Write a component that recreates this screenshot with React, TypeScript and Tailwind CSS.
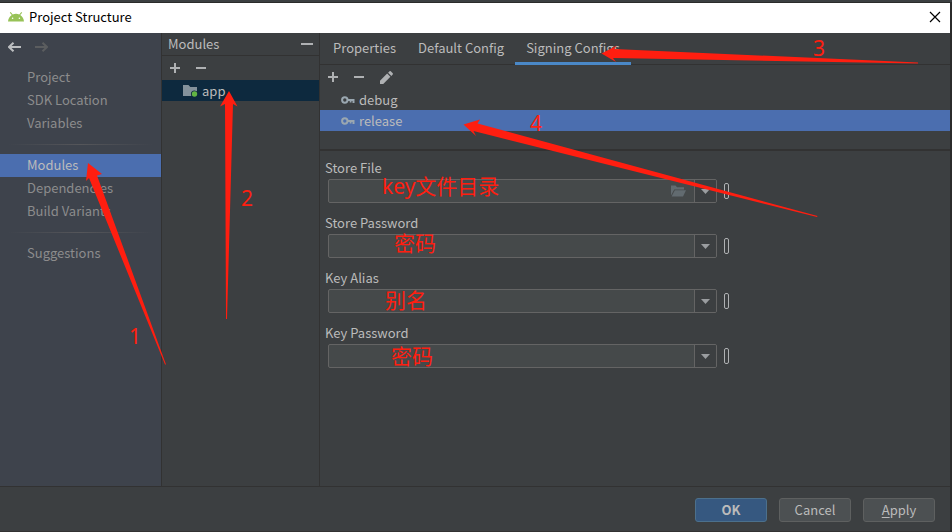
import React from "react";

const sidebarGroups = [
  ["Project", "SDK Location", "Variables"],
  ["Modules", "Dependencies", "Build Variants"],
  ["Suggestions"],
];

const tabs = ["Properties", "Default Config", "Signing Configs"];

const fields = [
  { id: "store-file", label: "Store File", browse: true },
  { id: "store-password", label: "Store Password", browse: false },
  { id: "key-alias", label: "Key Alias", browse: false },
  { id: "key-password", label: "Key Password", browse: false },
];

function AndroidIcon() {
  return (
    <svg width="16" height="10" viewBox="0 0 16 10" className="block">
      <path
        d="M0 9.600C.2 6.800 1.600 4.400 3.800 3L1.800.700l.900-.600L4.700 2.400a8.400 8.400 0 0 1 6.600 0L13.300 .100l.900.600L12.200 3c2.200 1.400 3.600 3.800 3.800 6.600z"
        fill="#97c257"
      />
      <circle cx="4.600" cy="6.300" r="0.800" fill="#fff" />
      <circle cx="11.400" cy="6.300" r="0.800" fill="#fff" />
    </svg>
  );
}

function ArrowIcon({ forward = false }: { forward?: boolean }) {
  return (
    <svg width="13" height="10" viewBox="0 0 13 10" fill="none" strokeWidth="2" className="block">
      {forward ? (
        <path d="M0 5h12M7.500.700 12 5 7.500 9.300" stroke="#5b5d5f" />
      ) : (
        <path d="M13 5H1M5.500.700 1 5l4.500 4.300" stroke="#bcbec0" />
      )}
    </svg>
  );
}

function PlusIcon() {
  return (
    <svg width="10" height="10" viewBox="0 0 10 10" className="block">
      <path d="M4 0h2v4h4v2H6v4H4V6H0V4h4z" fill="#afb1b3" />
    </svg>
  );
}

function MinusIcon() {
  return (
    <svg width="10" height="10" viewBox="0 0 10 10" className="block">
      <path d="M0 4h10v2H0z" fill="#afb1b3" />
    </svg>
  );
}

function PencilIcon() {
  return (
    <svg width="13" height="13" viewBox="0 0 14 14" className="block">
      <path d="M0 14v-3.500L7.700 2.800l3.500 3.500L3.500 14zM8.700 1.800 10.300.300q.700-.500 1.300 0l2.100 2.100q.500.600 0 1.300L12.200 5.300z" fill="#afb1b3" />
    </svg>
  );
}

function ModuleIcon() {
  return (
    <svg width="15" height="13" viewBox="0 0 15 13" className="block">
      <path d="M0 1h5.500L7.300 3H14V12H0z" fill="#84929c" />
      <circle cx="11.500" cy="10" r="3.600" fill="#0d293e" />
      <circle cx="11.500" cy="10" r="2.700" fill="#62b543" />
    </svg>
  );
}

function KeyIcon() {
  return (
    <svg width="14" height="8" viewBox="0 0 14 8" className="block">
      <circle cx="3.800" cy="4" r="2.700" fill="none" stroke="#9aa7b0" strokeWidth="2" />
      <path d="M6.500 3H13.500v4H11.500V5H10.500v1.500H8.700V5H6.500z" fill="#9aa7b0" />
    </svg>
  );
}

function FolderIcon() {
  return (
    <svg width="15" height="12" viewBox="0 0 15 12" className="block">
      <path d="M0 .500h4.500L6 2.200h7V4.500H3.200L0 10.500z" fill="#626b70" />
      <path d="M3.800 5.300H15L12 11.500H.600z" fill="#626b70" />
    </svg>
  );
}

function Sidebar() {
  return (
    <nav className="w-[162px] shrink-0 border-r border-[#323232] bg-[#3e434c]">
      <div className="flex h-[33px] items-center gap-3.5 px-2 pb-1.5">
        <button type="button" aria-label="Back"><ArrowIcon /></button>
        <button type="button" aria-label="Forward" disabled><ArrowIcon forward /></button>
      </div>
      {sidebarGroups.map((group, index) => (
        <div key={group[0]}>
          {index > 0 && (
            <div className="flex h-[19px] items-center px-2">
              <hr className="h-px w-full border-0 bg-linear-to-r from-transparent via-[#55565a] to-transparent" />
            </div>
          )}
          <ul>
            {group.map((name) => (
              <li key={name}>
                <a
                  href="#"
                  className={
                    name === "Modules"
                      ? "block h-[23px] bg-[#4b6eaf] pl-[27px] leading-[22px] text-[#bbbbbb]"
                      : "block h-[23px] pl-[27px] leading-[22px] text-[#8c8c8c]"
                  }
                >
                  {name}
                </a>
              </li>
            ))}
          </ul>
        </div>
      ))}
    </nav>
  );
}

function ModuleList() {
  return (
    <section className="w-[158px] shrink-0 border-r border-[#323232]">
      <header className="flex h-[23px] items-center justify-between border-b border-[#323232] px-1.5">
        <h2>Modules</h2>
        <button type="button" aria-label="Hide" className="h-0.5 w-3 bg-[#afb1b3]" />
      </header>
      <div className="flex h-6 items-center gap-4 px-2">
        <button type="button" aria-label="Add module"><PlusIcon /></button>
        <button type="button" aria-label="Remove module"><MinusIcon /></button>
      </div>
      <div className="flex h-[21px] items-center gap-1 bg-[#0d293e] pl-[21px]">
        <ModuleIcon />
        <span>app</span>
      </div>
    </section>
  );
}

function Field({ id, label, browse }: { id: string; label: string; browse: boolean }) {
  return (
    <div className="h-[55px]">
      <label htmlFor={id} className="block h-[22px] leading-[22px]">{label}</label>
      <div className="flex items-center gap-[7px] pl-[3px]">
        <div className="flex h-6 w-[389px] overflow-hidden rounded-xs border border-[#646464] bg-[#45494a]">
          <input id={id} type="text" className="min-w-0 flex-1 bg-transparent px-2 outline-none" />
          {browse && (
            <button type="button" aria-label="Browse" className="px-2"><FolderIcon /></button>
          )}
          <button
            type="button"
            aria-label={"Show options for " + label}
            className="flex w-[22px] items-center justify-center border-l border-[#646464] bg-[#3c3f41]"
          >
            <svg width="9" height="5" viewBox="0 0 9 5"><path d="M0 0h9L4.500 5z" fill="#9a9da0" /></svg>
          </button>
        </div>
        <button type="button" aria-label={"Bind " + label} className="h-4 w-[5px] rounded-xs border border-[#afb1b3]" />
      </div>
    </div>
  );
}

function SigningConfigs() {
  return (
    <main className="min-w-0 flex-1">
      <div role="tablist" className="flex h-8 border-b border-[#323232] pl-0.5">
        {tabs.map((tab) => (
          <button
            key={tab}
            type="button"
            role="tab"
            aria-selected={tab === "Signing Configs"}
            className={
              tab === "Signing Configs"
                ? "-mb-px border-b-3 border-[#4a88c7] px-[11px]"
                : "-mb-px border-b-3 border-transparent px-[11px]"
            }
          >
            {tab}
          </button>
        ))}
      </div>
      <div className="flex h-6 items-center gap-4 px-2">
        <button type="button" aria-label="Add config"><PlusIcon /></button>
        <button type="button" aria-label="Remove config"><MinusIcon /></button>
        <button type="button" aria-label="Rename config"><PencilIcon /></button>
      </div>
      <ul className="h-[62px] border-b-2 border-[#323232]">
        <li className="flex h-[21px] items-center gap-1 pl-[21px]"><KeyIcon />debug</li>
        <li className="flex h-[21px] items-center gap-1 bg-[#4b6eaf] pl-[21px]"><KeyIcon />release</li>
      </ul>
      <form className="px-[5px] pt-1.5">
        {fields.map((field) => <Field key={field.id} {...field} />)}
      </form>
    </main>
  );
}

const noteClass = "absolute whitespace-nowrap text-[21px] leading-6 text-[#ff1e10]";

function Annotations() {
  return (
    <div className="pointer-events-none absolute inset-x-0 -top-0.5 bottom-0 overflow-hidden font-['Noto_Sans','Noto_Sans_CJK_SC',sans-serif]">
      <svg width="952" height="532" viewBox="0 0 952 532" fill="#ff1e10" className="absolute top-0 left-0">
        <path d="M88 163 102 174 97 175.500 166 364.500 165 364.500 89 178 86 181z" />
        <path d="M229 91 237.500 106.500 233 104 227 319H226L225 104 220 106.500z" />
        <path d="M601.500 53.500 617 45.500 614 49 918 62.500V63.500L613 58 616 62z" />
        <path d="M463.500 124.500 480 119.500 477.500 123.500 817.500 216 817 217 473.500 131 476 136z" />
      </svg>
      <span className={noteClass + " top-[324px] left-[129px]"}>1</span>
      <span className={noteClass + " top-[186px] left-[241px]"}>2</span>
      <span className={noteClass + " top-9 left-[813px]"}>3</span>
      <span className={noteClass + " top-[111px] left-[530px]"}>4</span>
      <span className={noteClass + " top-[174px] left-[382px]"}>key文件目录</span>
      <span className={noteClass + " top-[231px] left-[394px]"}>密码</span>
      <span className={noteClass + " top-[288px] left-[385px]"}>别名</span>
      <span className={noteClass + " top-[344px] left-[391px]"}>密码</span>
    </div>
  );
}

const buttonClass = "h-6 w-[72px] rounded-[3px] border leading-[22px]";

export default function App() {
  return (
    <div className="relative flex h-screen flex-col border-t-2 border-[#3c3f41] bg-[#2b2b2b] pr-0.5 font-['Noto_Sans_CJK_SC','Noto_Sans',sans-serif] text-[13px] leading-5 text-[#bbbbbb]">
      <header className="mt-px flex h-[30px] shrink-0 items-center gap-[5px] bg-white pr-[9px] pb-0.5 pl-2 text-black">
        <AndroidIcon />
        <h1 className="flex-1">Project Structure</h1>
        <button type="button" aria-label="Close">
          <svg width="12" height="12" viewBox="0 0 12 12" className="block"><path d="m1 1 10 10M11 1 1 11" stroke="#000" strokeWidth="1.200" /></svg>
        </button>
      </header>
      <div className="flex min-h-0 flex-1 bg-[#3c3f41]">
        <Sidebar />
        <ModuleList />
        <SigningConfigs />
      </div>
      <footer className="flex shrink-0 justify-end gap-3 border-t border-b border-[#323232] bg-[#3c3f41] pt-[11px] pr-[15px] pb-[9px]">
        <button type="button" className={buttonClass + " border-[#4c708c] bg-[#365880] font-bold"}>OK</button>
        <button type="button" className={buttonClass + " border-[#5e6060] bg-[#4c5052]"}>Cancel</button>
        <button type="button" className={buttonClass + " border-[#5e6060] bg-[#4c5052]"}>
          <span className="underline underline-offset-2">A</span>pply
        </button>
      </footer>
      <Annotations />
    </div>
  );
}
